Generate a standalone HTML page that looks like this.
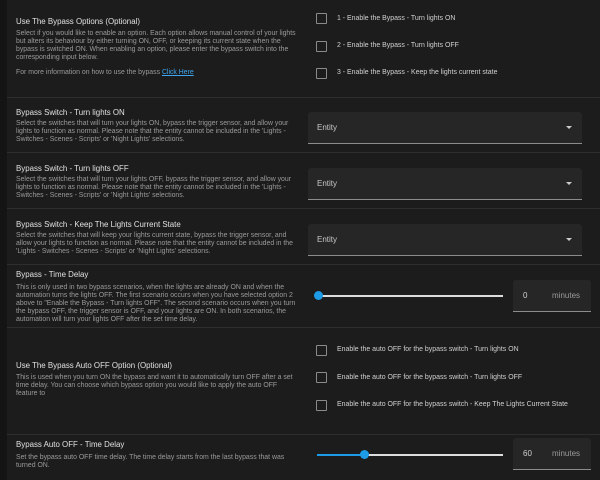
<!DOCTYPE html>
<html><head><style>
*{margin:0;padding:0;box-sizing:border-box}
body{width:600px;height:480px;background:#1c1c1c;font-family:"Liberation Sans",sans-serif;position:relative;overflow:hidden}
.strip{position:absolute;left:0;top:0;width:7px;height:480px;background:#141414}
.sep{position:absolute;left:7px;right:0;height:1px;background:#2e2e2e}
.t{position:absolute;left:16px;color:#e1e1e1;font-size:7.9px}
.d{position:absolute;left:16px;width:281px;color:#9a9a9a;font-size:6.9px;line-height:8.1px}
.d a{color:#3ea6f0;text-decoration:underline}
.cb{position:absolute;width:11px;height:11px;border:1.5px solid #8a8a8a;border-radius:1px}
.cl{position:absolute;color:#d0d0d0;font-size:6.95px}
.dd{position:absolute;left:308px;width:274px;height:32px;background:#262626;border-bottom:1px solid #8c8c8c;border-radius:3px 3px 0 0}
.dd span{position:absolute;left:9px;top:11px;color:#c8c8c8;font-size:8px}
.dd i{position:absolute;right:10px;top:14px;width:0;height:0;border-left:3px solid transparent;border-right:3px solid transparent;border-top:3px solid #ccc}
.track{position:absolute;left:317px;width:186px;height:2px;background:#dcdcdc}
.fill{position:absolute;height:2px;background:#1e9be6}
.knob{position:absolute;width:9px;height:9px;border-radius:50%;background:#1e9be6}
.nf{position:absolute;left:513px;width:78px;height:32px;background:#262626;border-bottom:1px solid #8c8c8c;border-radius:3px 3px 0 0}
.nf .v{position:absolute;left:10px;top:11px;color:#d0d0d0;font-size:8px}
.nf .u{position:absolute;left:39px;top:11px;color:#9a9a9a;font-size:8px}
</style></head><body>
<div class="strip"></div>

<div class="t" style="top:17px">Use The Bypass Options (Optional)</div>
<div class="d" style="top:30px">Select if you would like to enable an option. Each option allows manual control of your lights but alters its behaviour by either turning ON, OFF, or keeping its current state when the bypass is switched ON. When enabling an option, please enter the bypass switch into the corresponding input below.</div>
<div class="d" style="top:69px">For more information on how to use the bypass <a>Click Here</a></div>
<div class="cb" style="left:316px;top:13px"></div><div class="cl" style="left:337px;top:15px">1 - Enable the Bypass - Turn lights ON</div>
<div class="cb" style="left:316px;top:41px"></div><div class="cl" style="left:337px;top:42px">2 - Enable the Bypass - Turn lights OFF</div>
<div class="cb" style="left:316px;top:68px"></div><div class="cl" style="left:337px;top:69px">3 - Enable the Bypass - Keep the lights current state</div>
<div class="sep" style="top:97px"></div>

<div class="t" style="top:108px">Bypass Switch - Turn lights ON</div>
<div class="d" style="top:120px">Select the switches that will turn your lights ON, bypass the trigger sensor, and allow your lights to function as normal. Please note that the entity cannot be included in the 'Lights - Switches - Scenes - Scripts' or 'Night Lights' selections.</div>
<div class="dd" style="top:112px"><span>Entity</span><i></i></div>
<div class="sep" style="top:152px"></div>

<div class="t" style="top:164px">Bypass Switch - Turn lights OFF</div>
<div class="d" style="top:176px">Select the switches that will turn your lights OFF, bypass the trigger sensor, and allow your lights to function as normal. Please note that the entity cannot be included in the 'Lights - Switches - Scenes - Scripts' or 'Night Lights' selections.</div>
<div class="dd" style="top:168px"><span>Entity</span><i></i></div>
<div class="sep" style="top:208px"></div>

<div class="t" style="top:220px">Bypass Switch - Keep The Lights Current State</div>
<div class="d" style="top:232px">Select the switches that will keep your lights current state, bypass the trigger sensor, and allow your lights to function as normal. Please note that the entity cannot be included in the 'Lights - Switches - Scenes - Scripts' or 'Night Lights' selections.</div>
<div class="dd" style="top:224px"><span>Entity</span><i></i></div>
<div class="sep" style="top:264px"></div>

<div class="t" style="top:270px">Bypass - Time Delay</div>
<div class="d" style="top:284px">This is only used in two bypass scenarios, when the lights are already ON and when the automation turns the lights OFF. The first scenario occurs when you have selected option 2 above to "Enable the Bypass - Turn lights OFF". The second scenario occurs when you turn the bypass OFF, the trigger sensor is OFF, and your lights are ON. In both scenarios, the automation will turn your lights OFF after the set time delay.</div>
<div class="track" style="top:295px"></div>
<div class="knob" style="left:314px;top:291px"></div>
<div class="nf" style="top:280px"><span class="v">0</span><span class="u">minutes</span></div>
<div class="sep" style="top:327px"></div>

<div class="t" style="top:361px">Use The Bypass Auto OFF Option (Optional)</div>
<div class="d" style="top:374px">This is used when you turn ON the bypass and want it to automatically turn OFF after a set time delay. You can choose which bypass option you would like to apply the auto OFF feature to</div>
<div class="cb" style="left:316px;top:345px"></div><div class="cl" style="left:337px;top:346px">Enable the auto OFF for the bypass switch - Turn lights ON</div>
<div class="cb" style="left:316px;top:372px"></div><div class="cl" style="left:337px;top:374px">Enable the auto OFF for the bypass switch - Turn lights OFF</div>
<div class="cb" style="left:316px;top:400px"></div><div class="cl" style="left:337px;top:401px">Enable the auto OFF for the bypass switch - Keep The Lights Current State</div>
<div class="sep" style="top:434px"></div>

<div class="t" style="top:440px">Bypass Auto OFF - Time Delay</div>
<div class="d" style="top:454px">Set the bypass auto OFF time delay. The time delay starts from the last bypass that was turned ON.</div>
<div class="track" style="top:454px"></div>
<div class="fill" style="left:317px;width:47px;top:454px"></div>
<div class="knob" style="left:360px;top:450px"></div>
<div class="nf" style="top:438px"><span class="v">60</span><span class="u">minutes</span></div>
</body></html>
